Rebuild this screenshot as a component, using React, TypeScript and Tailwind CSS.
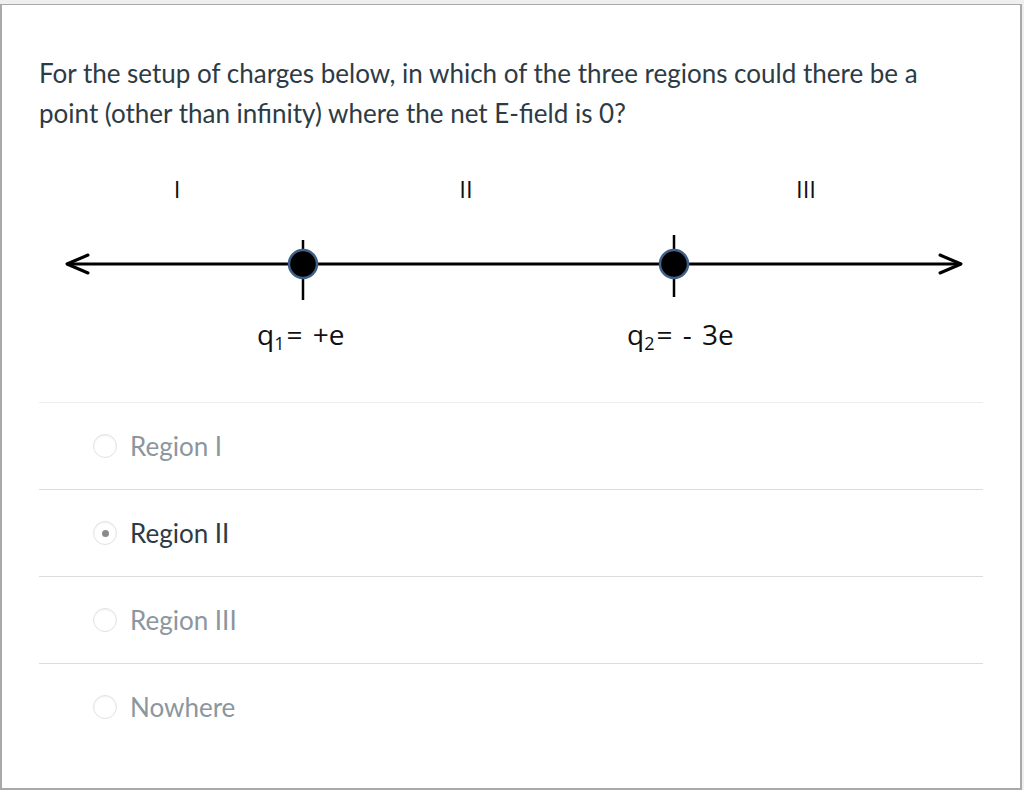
import { useState } from 'react';

const answers = ['Region I', 'Region II', 'Region III', 'Nowhere'];

function Diagram() {
  // coordinates are page x minus 39, page y minus 133
  const ox = 39;
  const oy = 133;
  const X = (x: number) => x - ox;
  const Y = (y: number) => y - oy;
  const font = '"Open Sans", "Liberation Sans", sans-serif';
  return (
    <svg width={944} height={269} viewBox="0 0 944 269" className="block">
      {/* region labels */}
      <text x={X(177)} y={Y(198)} fontSize={24} fontFamily={font} textAnchor="middle" fill="#111">I</text>
      <text x={X(466)} y={Y(198)} fontSize={24} fontFamily={font} textAnchor="middle" fill="#111">II</text>
      <text x={X(806)} y={Y(198)} fontSize={24} fontFamily={font} textAnchor="middle" fill="#111">III</text>

      {/* axis */}
      <line x1={X(67)} y1={Y(264)} x2={X(961)} y2={Y(264)} stroke="#000" strokeWidth={3} />
      <polyline points={`${X(88)},${Y(255)} ${X(67)},${Y(264)} ${X(88)},${Y(273)}`} fill="none" stroke="#000" strokeWidth={3} strokeLinecap="round" strokeLinejoin="round" />
      <polyline points={`${X(940)},${Y(255)} ${X(961)},${Y(264)} ${X(940)},${Y(273)}`} fill="none" stroke="#000" strokeWidth={3} strokeLinecap="round" strokeLinejoin="round" />

      {/* charge 1 */}
      <line x1={X(303)} y1={Y(240)} x2={X(303)} y2={Y(300)} stroke="#000" strokeWidth={2.5} />
      <circle cx={X(303)} cy={Y(264)} r={14} fill="#000" stroke="#41618a" strokeWidth={2.5} />

      {/* charge 2 */}
      <line x1={X(674)} y1={Y(235)} x2={X(674)} y2={Y(297)} stroke="#000" strokeWidth={2.5} />
      <circle cx={X(674)} cy={Y(264)} r={14} fill="#000" stroke="#41618a" strokeWidth={2.5} />

      {/* charge labels */}
      <text x={X(257)} y={Y(345)} fontSize={28} fontFamily={font} fill="#111" wordSpacing={3}>
        q<tspan fontSize={18} dy={5}>1</tspan><tspan dy={-5} dx={2}>= +e</tspan>
      </text>
      <text x={X(627)} y={Y(345)} fontSize={28} fontFamily={font} fill="#111" wordSpacing={3}>
        q<tspan fontSize={18} dy={5}>2</tspan><tspan dy={-5} dx={2}>= - 3e</tspan>
      </text>
    </svg>
  );
}

export default function App() {
  const [picked, setPicked] = useState<number>(1);
  return (
    <div className="w-[1024px] h-[790px] bg-[#efefef] pt-[4px] overflow-hidden" style={{ fontFamily: 'Lato, "Liberation Sans", sans-serif' }}>
      <div className="w-[1022px] h-[786px] bg-white border-2 border-t border-[#a9a9a9] px-[37px] pt-[48px]">
        <p className="text-[26px] leading-[40px] text-[#2d3b45]">
          For the setup of charges below, in which of the three regions could there be a point (other than infinity) where the net E-field is 0?
        </p>

        <Diagram />

        {/* answers */}
        <div className="flex flex-col">
          {answers.map((a, i) => (
            <label
              key={a}
              onClick={() => setPicked(i)}
              className={`flex items-center h-[87px] border-t ${i === 0 ? 'border-[#ececec]' : 'border-[#dcdcdc]'} cursor-pointer`}
            >
              <span className="ml-[54px] w-[24px] h-[24px] rounded-full border border-[#e2e2e2] bg-white shadow-[inset_0_1px_2px_rgba(0,0,0,0.06)] flex items-center justify-center">
                {picked === i && <span className="w-[7px] h-[7px] rounded-full bg-[#8a8a8a]" />}
              </span>
              <span className={`ml-[13px] text-[26px] ${picked === i ? 'text-[#2d3b45]' : 'text-[#8b969e]'}`}>{a}</span>
            </label>
          ))}
        </div>
      </div>
    </div>
  );
}
